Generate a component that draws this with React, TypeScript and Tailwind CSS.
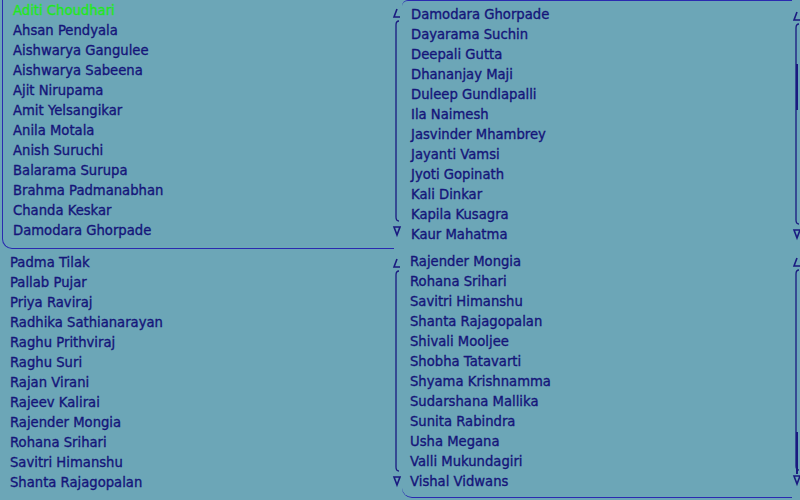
import React from 'react';

const ink = '#1a1a80';

const lists: string[][] = [
  ['Aditi Choudhari', 'Ahsan Pendyala', 'Aishwarya Gangulee', 'Aishwarya Sabeena', 'Ajit Nirupama', 'Amit Yelsangikar', 'Anila Motala', 'Anish Suruchi', 'Balarama Surupa', 'Brahma Padmanabhan', 'Chanda Keskar', 'Damodara Ghorpade'],
  ['Damodara Ghorpade', 'Dayarama Suchin', 'Deepali Gutta', 'Dhananjay Maji', 'Duleep Gundlapalli', 'Ila Naimesh', 'Jasvinder Mhambrey', 'Jayanti Vamsi', 'Jyoti Gopinath', 'Kali Dinkar', 'Kapila Kusagra', 'Kaur Mahatma'],
  ['Padma Tilak', 'Pallab Pujar', 'Priya Raviraj', 'Radhika Sathianarayan', 'Raghu Prithviraj', 'Raghu Suri', 'Rajan Virani', 'Rajeev Kalirai', 'Rajender Mongia', 'Rohana Srihari', 'Savitri Himanshu', 'Shanta Rajagopalan'],
  ['Rajender Mongia', 'Rohana Srihari', 'Savitri Himanshu', 'Shanta Rajagopalan', 'Shivali Mooljee', 'Shobha Tatavarti', 'Shyama Krishnamma', 'Sudarshana Mallika', 'Sunita Rabindra', 'Usha Megana', 'Valli Mukundagiri', 'Vishal Vidwans'],
];

// scrollbar strip: arrow, trough bracket, thumb, arrow
const ScrollBar: React.FC<{ top: number; thumb: [number, number] }> = ({ top, thumb }) => (
  <svg width="8" height="250" viewBox="0 0 8 250" className="shrink-0 overflow-visible">
    <path d={`M5 ${top} L2 ${top + 8} L8 ${top + 8}`} fill="none" stroke={ink} strokeWidth="1.6" />
    <path d={`M7 ${top + 12} Q4 ${top + 12} 4 ${top + 16} L4 ${top + 208} Q4 ${top + 212} 7 ${top + 212}`} fill="none" stroke={ink} strokeWidth="1.3" />
    <rect x="4" y={thumb[0]} width="2" height={thumb[1]} fill={ink} />
    <path d={`M2 ${top + 218} L8 ${top + 218} L5 ${top + 226} Z`} fill="none" stroke={ink} strokeWidth="1.6" />
  </svg>
);

const Rows: React.FC<{ items: string[]; selected?: number }> = ({ items, selected }) => (
  <ul>
    {items.map((n, i) => (
      <li
        key={n}
        className={`h-[20px] leading-[20px] whitespace-nowrap [-webkit-text-stroke:0.35px] ${i === selected ? 'text-[#22e622]' : 'text-[#15157a]'}`}
      >
        {n}
      </li>
    ))}
  </ul>
);

export default function App() {
  return (
    <div
      className="w-[800px] h-[500px] overflow-hidden bg-[#6ca6b7] grid grid-cols-[400px_400px] grid-rows-[250px_250px] text-[13.2px]"
      style={{ fontFamily: '"DejaVu Sans", sans-serif' }}
    >
      <div className="flex h-[250px]">
        <div className="w-[398px] h-[249px] border-l border-b border-[#2a2ab0] rounded-bl-[10px] pl-[10px] pt-[1px] ml-[2px]">
          <Rows items={lists[0]} selected={0} />
        </div>
        <div className="-ml-[2px] z-10">
          <ScrollBar top={9} thumb={[0, 0]} />
        </div>
      </div>
      <div className="flex h-[250px]">
        <div className="w-[393px] h-[248px] border-t border-[#2a2ab0] rounded-tl-[6px] pl-[9px] pt-[4px] ml-[2px]">
          <Rows items={lists[1]} />
        </div>
        <ScrollBar top={12} thumb={[64, 46]} />
      </div>
      <div className="flex h-[250px]">
        <div className="w-[392px] pl-[10px] pt-[3px]">
          <Rows items={lists[2]} />
        </div>
        <ScrollBar top={9} thumb={[0, 0]} />
      </div>
      <div className="flex h-[250px]">
        <div className="w-[393px] h-[248px] border-b border-[#2a2ab0] rounded-bl-[10px] pl-[8px] pt-[2px] ml-[2px]">
          <Rows items={lists[3]} />
        </div>
        <ScrollBar top={8} thumb={[182, 42]} />
      </div>
    </div>
  );
}
